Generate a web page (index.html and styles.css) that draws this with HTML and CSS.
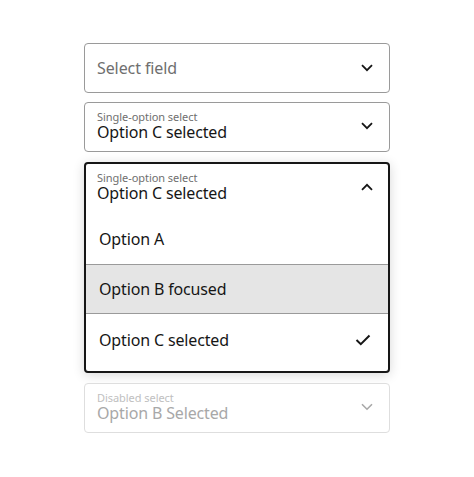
FILE: index.html
```html
<!DOCTYPE html>
<html lang="en">
<head>
<meta charset="utf-8">
<title>Select fields</title>
<link rel="stylesheet" href="styles.css">
</head>
<body>
<main class="stack">
  <div class="select">
    <div class="select-text">
      <span class="placeholder">Select field</span>
    </div>
    <svg class="icon" width="12" height="8" viewBox="0 0 12 8"><path d="M1 1.2 L6 6.2 L11 1.2" fill="none" stroke="#161616" stroke-width="1.8"/></svg>
  </div>

  <div class="select filled">
    <div class="select-text">
      <span class="label">Single-option select</span>
      <span class="value">Option C selected</span>
    </div>
    <svg class="icon" width="12" height="8" viewBox="0 0 12 8"><path d="M1 1.2 L6 6.2 L11 1.2" fill="none" stroke="#161616" stroke-width="1.8"/></svg>
  </div>

  <div class="select open">
    <div class="select-head">
      <div class="select-text">
        <span class="label">Single-option select</span>
        <span class="value">Option C selected</span>
      </div>
      <svg class="icon" width="12" height="8" viewBox="0 0 12 8"><path d="M1 6.8 L6 1.8 L11 6.8" fill="none" stroke="#161616" stroke-width="1.8"/></svg>
    </div>
    <ul class="options">
      <li class="option">Option A</li>
      <li class="option focused">Option B focused</li>
      <li class="option selected">Option C selected
        <svg class="check" width="16" height="12" viewBox="0 0 16 12"><path d="M1.5 6 L5.8 10.2 L14.5 1.5" fill="none" stroke="#161616" stroke-width="2"/></svg>
      </li>
    </ul>
  </div>

  <div class="select filled disabled">
    <div class="select-text">
      <span class="label">Disabled select</span>
      <span class="value">Option B Selected</span>
    </div>
    <svg class="icon" width="12" height="8" viewBox="0 0 12 8"><path d="M1 1.2 L6 6.2 L11 1.2" fill="none" stroke="#a8a8a8" stroke-width="1.6"/></svg>
  </div>
</main>
</body>
</html>
```

FILE: styles.css
```css
* { box-sizing: border-box; }
html, body { margin: 0; padding: 0; background: #ffffff; }
body {
  font-family: "Noto Sans", "Open Sans", sans-serif;
  color: #161616;
}
.stack {
  width: 306px;
  margin: 43px 0 0 84px;
  display: flex;
  flex-direction: column;
  gap: 9px;
}
.select {
  height: 50px;
  border: 1px solid #9a9a9a;
  border-radius: 4px;
  display: flex;
  align-items: center;
  justify-content: space-between;
  padding: 0 16px 0 12px;
  background: #fff;
}
.select.filled { padding-bottom: 2px; }
.select-text {
  display: flex;
  flex-direction: column;
}
.placeholder {
  font-size: 16px;
  color: #6f6f6f;
  line-height: 20px;
  letter-spacing: -0.1px;
}
.label {
  font-size: 11px;
  line-height: 13px;
  color: #6f6f6f;
  letter-spacing: -0.05px;
}
.value {
  font-size: 16px;
  line-height: 19px;
  color: #161616;
  letter-spacing: -0.15px;
}
.icon { display: block; flex: none; }

.select.open {
  height: auto;
  display: block;
  padding: 0;
  border: 2px solid #161616;
  box-shadow: 0 2px 12px rgba(0, 0, 0, 0.16);
  margin-top: 1px;
}
.select-head {
  height: 50px;
  display: flex;
  align-items: center;
  justify-content: space-between;
  padding: 0 15px 5px 11px;
}
.options {
  list-style: none;
  margin: 0;
  padding: 0 0 5px;
}
.option {
  height: 50px;
  display: flex;
  align-items: center;
  justify-content: space-between;
  padding: 0 17px 0 13px;
  font-size: 16px;
  letter-spacing: -0.15px;
  color: #161616;
}
.option.focused {
  background: #e5e5e5;
  border-top: 1px solid #9a9a9a;
  border-bottom: 1px solid #9a9a9a;
}
.option.selected { height: 52px; }
.check { display: block; flex: none; }

.select.disabled {
  border-color: #dedede;
  margin-top: 1px;
}
.select.disabled .label { color: #c0c0c0; }
.select.disabled .value { color: #a8a8a8; }
```
